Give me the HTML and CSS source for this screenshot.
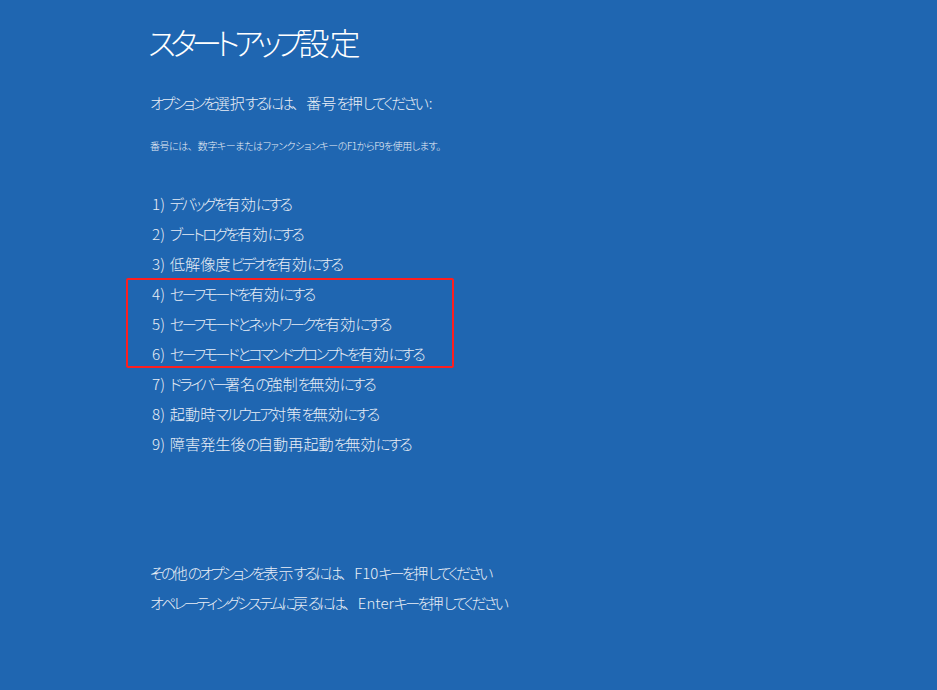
FILE: index.html
```html
<!DOCTYPE html>
<html lang="ja">
<head>
<meta charset="utf-8">
<title>スタートアップ設定</title>
<link rel="stylesheet" href="styles.css">
</head>
<body>
<main class="screen">
  <h1 class="title">スタートアップ<span class="kj">設定</span></h1>
  <p class="prompt">オプションを<span class="kj">選択</span>するには<span class="comma">、</span><span class="kj">番号</span>を<span class="kj">押</span>してくださ<span class="kj">い:</span></p>
  <p class="note">番号には<span class="comma">、</span>数字キーまたはファンクションキーのF1からF9を使用します。</p>
  <ol class="options">
    <li class="option"><span class="num">1)</span> デバッグを<span class="kj">有効</span>にする</li>
    <li class="option"><span class="num">2)</span> ブートログを<span class="kj">有効</span>にする</li>
    <li class="option"><span class="num">3)</span> <span class="kj">低解像度</span>ビデオを<span class="kj">有効</span>にする</li>
    <li class="group">
      <ol class="highlight">
        <li class="option"><span class="num">4)</span> セーフモードを<span class="kj">有効</span>にする</li>
        <li class="option"><span class="num">5)</span> セーフモードとネットワークを<span class="kj">有効</span>にする</li>
        <li class="option"><span class="num">6)</span> セーフモードとコマンドプロンプトを<span class="kj">有効</span>にする</li>
      </ol>
    </li>
    <li class="option"><span class="num">7)</span> ドライバー<span class="kj">署名</span>の<span class="kj">強制</span>を<span class="kj">無効</span>にする</li>
    <li class="option"><span class="num">8)</span> <span class="kj">起動時</span>マルウェア<span class="kj">対策</span>を<span class="kj">無効</span>にする</li>
    <li class="option"><span class="num">9)</span> <span class="kj">障害発生後</span>の<span class="kj">自動再起動</span>を<span class="kj">無効</span>にする</li>
  </ol>
  <div class="footer">
    <p class="hint">その<span class="kj">他</span>のオプションを<span class="kj">表示</span>するには<span class="comma">、</span><span class="kj">F10</span>キーを<span class="kj">押</span>してください</p>
    <p class="hint">オペレーティングシステムに<span class="kj">戻</span>るには<span class="comma">、</span><span class="kj">Enter</span>キーを<span class="kj">押</span>してください</p>
  </div>
</main>
</body>
</html>
```

FILE: styles.css
```css
html, body {
  margin: 0;
  padding: 0;
}
body {
  background: #1f66b1;
  width: 937px;
  height: 690px;
  overflow: hidden;
  font-family: "Noto Sans CJK JP", "Noto Sans", sans-serif;
  font-feature-settings: "palt";
  font-weight: 300;
  color: #e9eef6;
}
/* kanji / latin runs keep their natural advance; kana are tightened */
.kj,
.num {
  letter-spacing: 0;
}
.comma {
  font-feature-settings: normal;
  letter-spacing: 0;
}
.screen {
  padding: 22px 0 0 148px;
}
.title {
  margin: 0;
  font-size: 31px;
  line-height: 40px;
  font-weight: 300;
  letter-spacing: -5.8px;
  color: #ffffff;
}
.prompt {
  margin: 31px 0 0 2px;
  font-size: 15px;
  line-height: 20px;
  letter-spacing: -2.5px;
}
.note {
  margin: 25px 0 0 2px;
  font-size: 10px;
  line-height: 16px;
  letter-spacing: -0.45px;
}
.options,
.highlight {
  list-style: none;
  margin: 0;
  padding: 0;
}
.options {
  margin-top: 34px;
  padding-left: 4px;
}
.option {
  font-size: 15.2px;
  line-height: 30px;
  letter-spacing: -2.5px;
  white-space: nowrap;
}
.num {
  margin-right: 4px;
}
.highlight {
  margin-left: -26px;
  padding-left: 26px;
  width: 302px;
  outline: 2px solid #ff1e1e;
  outline-offset: -2px;
  border-radius: 2px;
}
.footer {
  margin-top: 100px;
  padding-left: 2px;
}
.hint {
  margin: 0;
  font-size: 15px;
  line-height: 30px;
  letter-spacing: -2.65px;
  white-space: nowrap;
}
```
